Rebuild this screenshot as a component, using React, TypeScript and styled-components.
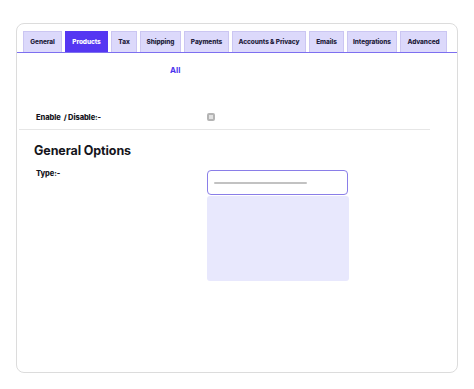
import React from "react";
import styled, { createGlobalStyle } from "styled-components";

const GlobalStyle = createGlobalStyle`
  html, body {
    margin: 0;
    padding: 0;
    background: #ffffff;
    font-family: Inter, "Noto Sans", sans-serif;
    color: #1a1a24;
  }
`;

const tabs = [
  { label: "General", width: 39 },
  { label: "Products", width: 43 },
  { label: "Tax", width: 26 },
  { label: "Shipping", width: 41 },
  { label: "Payments", width: 45 },
  { label: "Accounts & Privacy", width: 74 },
  { label: "Emails", width: 35 },
  { label: "Integrations", width: 50 },
  { label: "Advanced", width: 47 },
];

const Page = styled.div`
  padding: 23px 0 0 16px;
`;

const Card = styled.div`
  box-sizing: border-box;
  width: 442px;
  height: 350px;
  border: 1px solid #dcdcdc;
  border-radius: 8px;
  background: #fff;
  padding-top: 7px;
`;

const TabBar = styled.div`
  display: flex;
  gap: 3px;
  padding-left: 6px;
  border-bottom: 1px solid #7d6ff0;
`;

const Tab = styled.div<{ $active?: boolean; $w: number }>`
  box-sizing: border-box;
  width: ${(p) => p.$w}px;
  height: 21px;
  display: flex;
  align-items: center;
  justify-content: center;
  font-size: 6.5px;
  font-weight: 800;
  letter-spacing: -0.1px;
  white-space: nowrap;
  background: ${(p) => (p.$active ? "#5537f2" : "#dcd9fb")};
  color: ${(p) => (p.$active ? "#ffffff" : "#24223c")};
  border: 1px solid ${(p) => (p.$active ? "#5537f2" : "#cbc6f2")};
  border-bottom: none;
`;

const SubNav = styled.div`
  padding: 12px 0 0 153px;
  height: 24px;
  box-sizing: border-box;
  font-size: 8px;
  font-weight: 700;
  color: #4b32ee;
`;

const Row = styled.div`
  display: grid;
  grid-template-columns: 171px 1fr;
  padding-left: 19px;
  align-items: center;
`;

const EnableRow = styled(Row)`
  margin-top: 33px;
  height: 14px;
  margin-right: 27px;
  padding-bottom: 5px;
  border-bottom: 1px solid #e6e6e6;
  margin-left: 2px;
  padding-left: 17px;
`;

const Label = styled.div`
  font-size: 7.5px;
  font-weight: 800;
  color: #15151c;
  letter-spacing: -0.1px;
`;

const Checkbox = styled.div`
  box-sizing: border-box;
  width: 8px;
  height: 8px;
  border: 2px solid #b4b4b4;
  border-radius: 2px;
  background: #e2e2e2;
`;

const SectionTitle = styled.h2`
  margin: 13px 0 0 17px;
  font-size: 12.5px;
  font-weight: 700;
  color: #15151c;
  letter-spacing: -0.1px;
`;

const TypeRow = styled(Row)`
  margin-top: 11px;
  align-items: start;
`;

const SelectWrap = styled.div`
  display: flex;
  flex-direction: column;
  gap: 1px;
  margin-top: 1px;
`;

const SelectBox = styled.div`
  box-sizing: border-box;
  width: 141px;
  height: 25px;
  border: 1px solid #8a7ee8;
  border-radius: 4px;
  display: flex;
  align-items: center;
  padding-left: 6px;
`;

const Placeholder = styled.div`
  width: 93px;
  height: 2px;
  border-radius: 1px;
  background: #c2c2c2;
`;

const Menu = styled.div`
  width: 142px;
  height: 85px;
  background: #e8e8fd;
  border-radius: 3px;
`;

export default function App() {
  return (
    <>
      <GlobalStyle />
      <Page>
        <Card>
          <TabBar>
            {tabs.map((t) => (
              <Tab key={t.label} $w={t.width} $active={t.label === "Products"}>
                {t.label}
              </Tab>
            ))}
          </TabBar>
          <SubNav>All</SubNav>
          <EnableRow>
            <Label>Enable&nbsp; / Disable:-</Label>
            <Checkbox />
          </EnableRow>
          <SectionTitle>General Options</SectionTitle>
          <TypeRow>
            <Label>Type:-</Label>
            <SelectWrap>
              <SelectBox>
                <Placeholder />
              </SelectBox>
              <Menu />
            </SelectWrap>
          </TypeRow>
        </Card>
      </Page>
    </>
  );
}
